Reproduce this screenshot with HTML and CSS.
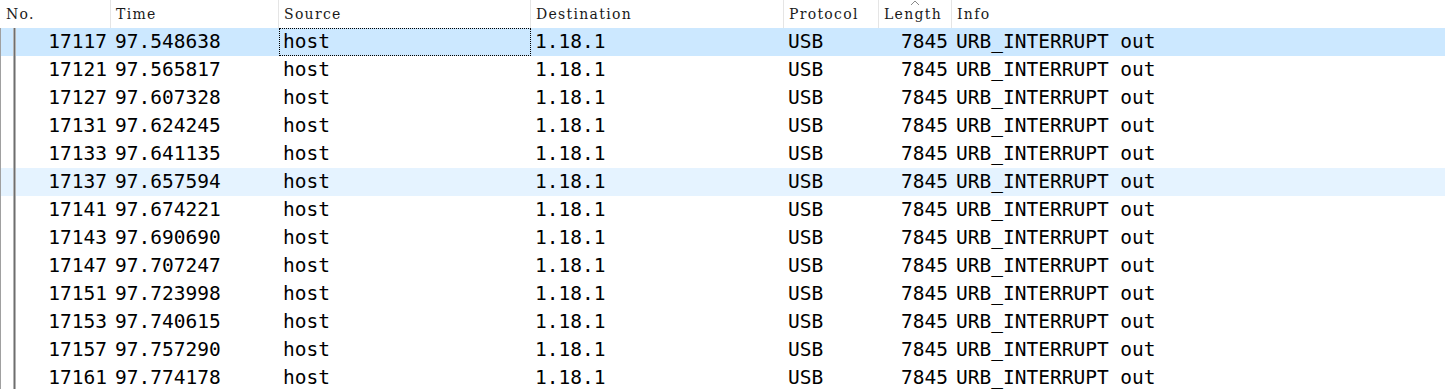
FILE: index.html
```html
<!DOCTYPE html>
<html lang="en">
<head>
  <meta charset="UTF-8" />
  <title>Packet List</title>
  <link rel="stylesheet" href="styles.css">
</head>
<body>
  <div class="packet-list">
    <!-- Column headers -->
    <div class="head">
      <div class="hc c-no">No.</div>
      <div class="hc c-time">Time</div>
      <div class="hc c-src">Source</div>
      <div class="hc c-dst">Destination</div>
      <div class="hc c-proto">Protocol</div>
      <div class="hc c-len">Length
        <svg class="sort" width="10" height="6" viewBox="0 0 10 6"><path d="M1 5 L5 1 L9 5" fill="none" stroke="#8a8a8a" stroke-width="1"/></svg>
      </div>
      <div class="hc c-info">Info</div>
    </div>

    <!-- Rows -->
    <div id="rows"></div>
  </div>

  <script>
    const packets = [
      ['17117', '97.548638'],
      ['17121', '97.565817'],
      ['17127', '97.607328'],
      ['17131', '97.624245'],
      ['17133', '97.641135'],
      ['17137', '97.657594'],
      ['17141', '97.674221'],
      ['17143', '97.690690'],
      ['17147', '97.707247'],
      ['17151', '97.723998'],
      ['17153', '97.740615'],
      ['17157', '97.757290'],
      ['17161', '97.774178']
    ];

    const rows = document.getElementById('rows');
    packets.forEach((p, i) => {
      const row = document.createElement('div');
      row.className = 'row';
      if (i === 0) row.classList.add('selected');
      if (i === 5) row.classList.add('hover');
      row.innerHTML =
        `<div class="c c-no num">${p[0]}</div>` +
        `<div class="c c-time">${p[1]}</div>` +
        `<div class="c c-src${i === 0 ? ' focus' : ''}">host</div>` +
        `<div class="c c-dst">1.18.1</div>` +
        `<div class="c c-proto">USB</div>` +
        `<div class="c c-len num">7845</div>` +
        `<div class="c c-info">URB_INTERRUPT out</div>`;
      rows.appendChild(row);
    });
  </script>
</body>
</html>
```

FILE: styles.css
```css
body { margin: 0; background: #fff; overflow: hidden; }
.packet-list { width: 1445px; }

.head { display: flex; height: 28px; font-family: "DejaVu Serif", serif; font-size: 14px; letter-spacing: 1.3px; color: #1a1a1a; }
.hc { box-sizing: border-box; height: 28px; line-height: 29px; padding-left: 5px; border-right: 1px solid #e5e5e5; position: relative; white-space: nowrap; }
.hc.c-no { padding-left: 6px; }
.hc.c-info { border-right: none; }
.sort { position: absolute; left: 31px; top: 0; }

.c-no { width: 111px; }
.c-time { width: 168px; }
.c-src { width: 252px; }
.c-dst { width: 253px; }
.c-proto { width: 95px; }
.c-len { width: 73px; }
.c-info { flex: 1; }

.row { display: flex; height: 28px; font-family: "DejaVu Sans Mono", monospace; font-size: 19.5px; color: #000; }
.row.selected { background: #cce8ff; }
.row.hover { background: #e5f3ff; }
.c { box-sizing: border-box; height: 28px; line-height: 27px; padding: 0 4px; white-space: nowrap; }
.c.num { text-align: right; }
.c.c-no {
  background: linear-gradient(to right, #a0a0a0 0, #a0a0a0 1px, transparent 1px, transparent 13px,
    #b4b4b4 13px, #b4b4b4 14px, #6e6e6e 14px, #6e6e6e 15px, #b4b4b4 15px, #b4b4b4 16px, transparent 16px);
}
.c.focus { outline: 1px dotted #000; outline-offset: -1px; }
```
